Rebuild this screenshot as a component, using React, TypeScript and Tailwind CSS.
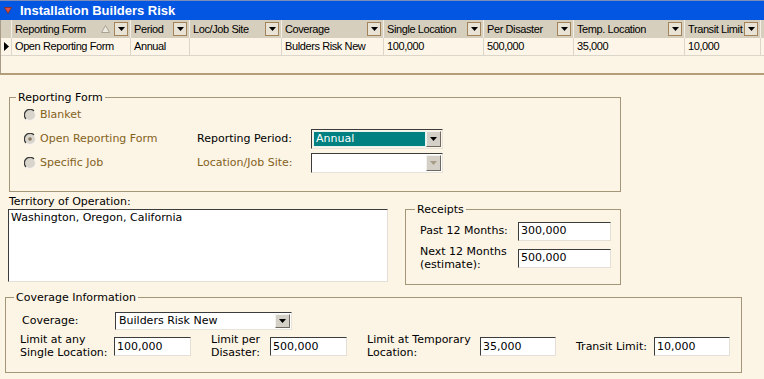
import type { ReactNode } from "react";

const cols = [
  { label: "Reporting Form", w: 119, value: "Open Reporting Form", sort: true },
  { label: "Period", w: 59, value: "Annual" },
  { label: "Loc/Job Site", w: 92, value: "" },
  { label: "Coverage", w: 102, value: "Bulders Risk New" },
  { label: "Single Location", w: 100, value: "100,000" },
  { label: "Per Disaster", w: 90, value: "500,000" },
  { label: "Temp. Location", w: 111, value: "35,000" },
  { label: "Transit Limit", w: 76, value: "10,000" },
];

const form = { fontFamily: '"DejaVu Sans", Verdana, sans-serif' };
const grid = { fontFamily: '"Liberation Sans", Arial, sans-serif' };

function DropButton({ disabled = false }: { disabled?: boolean }) {
  return (
    <div className="flex h-full w-[15px] shrink-0 items-center justify-center border border-t-[#f4f2ee] border-l-[#f4f2ee] border-b-[#6e6a62] border-r-[#6e6a62] bg-[#d4d0c8]">
      <svg width="7" height="4" viewBox="0 0 7 4">
        <path d="M0 0h7L3.5 4z" fill={disabled ? "#a89c88" : "#000"} />
      </svg>
    </div>
  );
}

function GridFilter() {
  return (
    <div className="flex h-[14px] w-[14px] shrink-0 items-center justify-center border border-[#a2835a] bg-[#e9e3d6]">
      <svg width="7" height="4" viewBox="0 0 7 4">
        <path d="M0 0h7L3.5 4z" fill="#000" />
      </svg>
    </div>
  );
}

function Radio({ checked = false }: { checked?: boolean }) {
  return (
    <svg width="12" height="12" viewBox="0 0 12 12" className="shrink-0">
      <circle cx="6" cy="6" r="5.5" fill="#d9d5cc" />
      <path d="M10 2A5.5 5.5 0 0 0 2 10" fill="none" stroke="#3a3a3a" strokeWidth="1.3" />
      <path d="M2 10A5.5 5.5 0 0 0 10 2" fill="none" stroke="#f6f3ec" strokeWidth="1.2" />
      {checked && <circle cx="6" cy="6" r="1.8" fill="#8a7a60" />}
    </svg>
  );
}

function TextBox({ value, w }: { value: string; w: number }) {
  return (
    <div
      style={{ width: w }}
      className="flex h-[19px] shrink-0 items-center border border-t-[#3c3c3c] border-l-[#3c3c3c] border-b-[#e4e0d8] border-r-[#e4e0d8] bg-white px-[2px] text-[11px] text-black"
    >
      {value}
    </div>
  );
}

function Group({ title, className, children }: { title: string; className: string; children: ReactNode }) {
  return (
    <fieldset className={`border border-[#a69678] p-0 ${className}`}>
      <legend className="px-[2px] text-[11px] leading-[13px] text-black">{title}</legend>
      {children}
    </fieldset>
  );
}

export default function App() {
  return (
    <div className="flex h-[379px] w-[764px] flex-col overflow-hidden bg-[#fcf4e5]" style={form}>
      {/* title bar */}
      <div className="flex h-[20px] shrink-0 items-center border-t border-[#7c8cb8] bg-[#0256e2]">
        <svg width="8" height="7" viewBox="0 0 8 7" className="ml-[4px]">
          <path d="M0.5 0.5h7L4 6.5z" fill="#e0504a" stroke="#8a2a20" strokeWidth="0.8" />
        </svg>
        <span className="ml-[8px] text-[13px] font-bold text-white" style={grid}>
          Installation Builders Risk
        </span>
      </div>

      {/* grid */}
      <div className="shrink-0 border-b-2 border-l border-b-[#b39c78] border-l-[#a89c88] text-[11px] tracking-[-0.4px] text-black" style={grid}>
        <div className="flex h-[18px] bg-[#d7cfbd]">
          <div className="w-[11px] shrink-0 border-r border-[#f3efe6]" />
          {cols.map((c) => (
            <div
              key={c.label}
              style={{ width: c.w }}
              className="flex shrink-0 items-center border-r border-[#f3efe6] pl-[3px] pr-[2px]"
            >
              <span className="flex-1 truncate">{c.label}</span>
              {c.sort && (
                <svg width="9" height="8" viewBox="0 0 9 8" className="mr-[4px]">
                  <path d="M4.5 0.5L8.5 7.5H0.5z" fill="#eeeae0" stroke="#a8a294" strokeWidth="1" />
                </svg>
              )}
              <GridFilter />
            </div>
          ))}
        </div>
        <div className="flex h-[18px] border-b border-[#dcd6ca] bg-[#fdf5e7]">
          <div className="flex w-[11px] shrink-0 items-center justify-center border-r border-[#dcd6ca]">
            <svg width="5" height="9" viewBox="0 0 5 9">
              <path d="M0 0l5 4.5L0 9z" fill="#000" />
            </svg>
          </div>
          {cols.map((c) => (
            <div
              key={c.label}
              style={{ width: c.w }}
              className="flex shrink-0 items-center border-r border-[#dcd6ca] pl-[3px]"
            >
              {c.value}
            </div>
          ))}
        </div>
        <div className="h-[17px]" />
      </div>

      {/* reporting form */}
      <Group title="Reporting Form" className="ml-[9px] mt-[16px] w-[612px] shrink-0 pb-[18px] pl-[6px]">
        <div className="mt-[1px] flex flex-col gap-[4px] text-[11px]">
          <div className="flex h-[20px] items-center">
            <div className="ml-[8px] flex w-[173px] items-center gap-[4px] text-[#83621c]">
              <Radio />
              <span>Blanket</span>
            </div>
          </div>
          <div className="flex h-[20px] items-center">
            <div className="ml-[8px] flex w-[173px] items-center gap-[4px] text-[#83621c]">
              <Radio checked />
              <span>Open Reporting Form</span>
            </div>
            <span className="w-[114px]">Reporting Period:</span>
            <div className="flex h-[20px] w-[132px] border border-t-[#3c3c3c] border-l-[#3c3c3c] border-b-[#e8e4dc] border-r-[#e8e4dc] p-[1px]">
              <div className="flex flex-1 items-center border border-[#e6f2f0] bg-[#008080] px-[2px] text-white">
                Annual
              </div>
              <DropButton />
            </div>
          </div>
          <div className="flex h-[20px] items-center">
            <div className="ml-[8px] flex w-[173px] items-center gap-[4px] text-[#83621c]">
              <Radio />
              <span>Specific Job</span>
            </div>
            <span className="w-[114px] text-[#83621c]">Location/Job Site:</span>
            <div className="flex h-[20px] w-[132px] border border-t-[#3c3c3c] border-l-[#3c3c3c] border-b-[#e8e4dc] border-r-[#e8e4dc] bg-white p-[1px]">
              <div className="flex-1" />
              <DropButton disabled />
            </div>
          </div>
        </div>
      </Group>

      {/* territory + receipts */}
      <div className="mt-[3px] flex shrink-0 items-start text-[11px]">
        <div className="ml-[8px] flex w-[380px] flex-col">
          <span className="ml-[1px] leading-[13px]">Territory of Operation:</span>
          <div className="mt-[1px] h-[73px] border border-t-[#3c3c3c] border-l-[#3c3c3c] border-b-[#e4e0d8] border-r-[#e4e0d8] bg-white px-[2px] leading-[15px]">
            Washington, Oregon, California
          </div>
        </div>
        <Group title="Receipts" className="ml-[17px] mt-[8px] w-[216px] pb-[13px] pl-[9px]">
          <div className="mt-[6px] flex flex-col gap-[4px]">
            <div className="ml-[5px] flex h-[19px] items-center">
              <span className="w-[98px]">Past 12 Months:</span>
              <TextBox value="300,000" w={93} />
            </div>
            <div className="ml-[5px] flex h-[26px] items-center">
              <span className="w-[98px] leading-[13px]">
                Next 12 Months
                <br />
                (estimate):
              </span>
              <TextBox value="500,000" w={93} />
            </div>
          </div>
        </Group>
      </div>

      {/* coverage information */}
      <Group title="Coverage Information" className="ml-[5px] mt-[6px] w-[737px] shrink-0 pb-[13px] pl-[8px]">
        <div className="mt-[8px] flex h-[18px] items-center text-[11px]">
          <span className="ml-[8px] w-[93px]">Coverage:</span>
          <div className="flex h-[18px] w-[177px] border border-t-[#3c3c3c] border-l-[#3c3c3c] border-b-[#e8e4dc] border-r-[#e8e4dc] bg-white p-[1px]">
            <div className="flex flex-1 items-center px-[2px]">Builders Risk New</div>
            <DropButton />
          </div>
        </div>
        <div className="mt-[3px] flex h-[26px] items-center text-[11px] leading-[13px]">
          <span className="ml-[6px] w-[94px]">
            Limit at any
            <br />
            Single Location:
          </span>
          <TextBox value="100,000" w={77} />
          <span className="ml-[20px] w-[59px]">
            Limit per
            <br />
            Disaster:
          </span>
          <TextBox value="500,000" w={77} />
          <span className="ml-[20px] w-[113px]">
            Limit at Temporary
            <br />
            Location:
          </span>
          <TextBox value="35,000" w={76} />
          <span className="ml-[20px] w-[78px]">Transit Limit:</span>
          <TextBox value="10,000" w={76} />
        </div>
      </Group>
    </div>
  );
}
